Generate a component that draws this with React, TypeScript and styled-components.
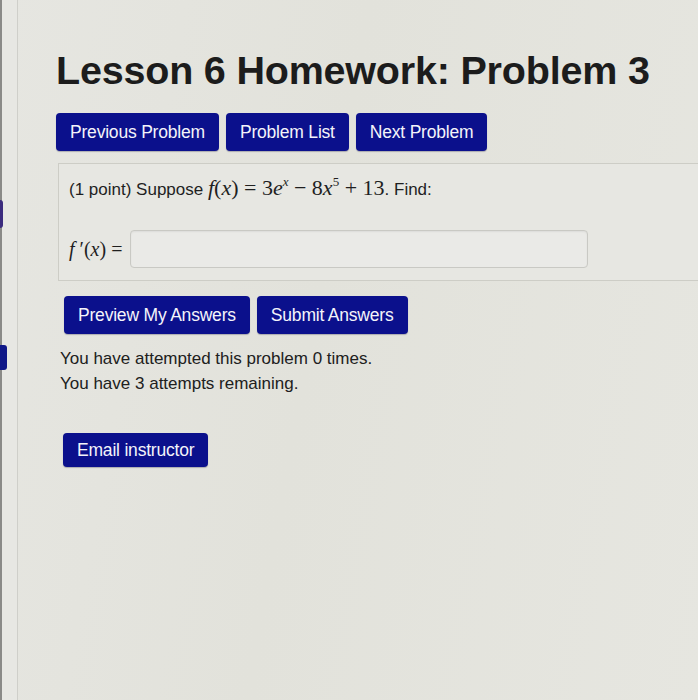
import React from 'react'
import styled, { createGlobalStyle } from 'styled-components'

const GlobalStyle = createGlobalStyle`
  html, body {
    margin: 0;
    padding: 0;
    overflow: hidden;
    background: #e3e3dd;
  }
  body {
    font-family: "Liberation Sans", Arial, Helvetica, sans-serif;
    color: #1f1f1f;
  }
`

const Page = styled.div`
  display: flex;
  width: 698px;
  height: 700px;
  overflow: hidden;
  background: linear-gradient(100deg, #e6e6e1 0%, #e2e2db 45%, #e6e6e0 100%);
`

const Sidebar = styled.div`
  width: 15px;
  flex: none;
  display: flex;
  flex-direction: column;
  border-left: 2px solid #8a8a88;
  border-right: 1px solid #cfcfca;
  background: #e7e7e3;
  padding-top: 200px;
`

const SideTab = styled.div<{ $w: number; $h: number; $gap: number; $color: string }>`
  width: ${p => p.$w}px;
  height: ${p => p.$h}px;
  margin-top: ${p => p.$gap}px;
  margin-left: -2px;
  background: ${p => p.$color};
  border-radius: 0 3px 3px 0;
`

const Main = styled.main`
  flex: 1;
  min-width: 0;
  padding: 45px 0 0 38px;
`

const Title = styled.h1`
  margin: 0 0 18px;
  font-size: 39.5px;
  line-height: 50px;
  font-weight: 700;
  color: #1c1c1c;
  letter-spacing: -0.2px;
`

const ButtonRow = styled.div<{ $indent?: number; $top?: number }>`
  display: flex;
  gap: 7px;
  margin-left: ${p => p.$indent ?? 0}px;
  margin-top: ${p => p.$top ?? 0}px;
`

const NavButton = styled.button<{ $height?: number }>`
  height: ${p => p.$height ?? 38}px;
  padding: 0 14px;
  border: none;
  border-radius: 4px;
  background: #0b108c;
  color: #f4f4fa;
  font-family: "Liberation Sans", Arial, sans-serif;
  font-size: 17.5px;
  letter-spacing: -0.2px;
  box-shadow: 0 1px 1px rgba(0, 0, 40, 0.25);
`

const ProblemPanel = styled.section`
  margin: 12px -30px 0 2px;
  padding: 14px 10px 12px 10px;
  background: #e7e7e2;
  border: 1px solid #cdcdc6;
  border-right: none;
`

const ProblemText = styled.p`
  margin: 0 0 28px;
  font-size: 17px;
  line-height: 24px;
`

const Math = styled.span<{ $size?: number }>`
  font-family: "Liberation Serif", "Times New Roman", serif;
  font-size: ${p => p.$size ?? 22}px;
  line-height: 0;

  i {
    font-style: italic;
  }

  sup {
    font-size: 13px;
    line-height: 0;
    vertical-align: 9px;
  }
`

const AnswerRow = styled.div`
  display: flex;
  align-items: center;
  gap: 8px;
`

const AnswerInput = styled.input`
  width: 458px;
  height: 38px;
  box-sizing: border-box;
  border: 1px solid #c9c9c4;
  border-radius: 4px;
  background: #eaeae7;
  box-shadow: inset 0 1px 2px rgba(0, 0, 0, 0.06);
`

const Attempts = styled.div`
  margin: 12px 0 0 4px;
  font-size: 17px;
  line-height: 25px;
  color: #202020;
`

const EmailRow = styled.div`
  margin: 37px 0 0 7px;
`

export default function App() {
  return (
    <>
      <GlobalStyle />
      <Page>
        <Sidebar>
          <SideTab $w={3} $h={28} $gap={0} $color="#3b2b7e" />
          <SideTab $w={7} $h={25} $gap={117} $color="#0f1788" />
        </Sidebar>
        <Main>
          <Title>Lesson 6 Homework: Problem 3</Title>
          <ButtonRow>
            <NavButton>Previous Problem</NavButton>
            <NavButton>Problem List</NavButton>
            <NavButton>Next Problem</NavButton>
          </ButtonRow>
          <ProblemPanel>
            <ProblemText>
              (1 point) Suppose{' '}
              <Math>
                <i>f</i>(<i>x</i>) = 3<i>e</i><sup><i>x</i></sup> − 8<i>x</i><sup>5</sup> + 13
              </Math>
              . Find:
            </ProblemText>
            <AnswerRow>
              <Math $size={20}>
                <i>f</i> ′(<i>x</i>) =
              </Math>
              <AnswerInput aria-label="answer" />
            </AnswerRow>
          </ProblemPanel>
          <ButtonRow $indent={8} $top={15}>
            <NavButton>Preview My Answers</NavButton>
            <NavButton>Submit Answers</NavButton>
          </ButtonRow>
          <Attempts>
            You have attempted this problem 0 times.
            <br />
            You have 3 attempts remaining.
          </Attempts>
          <EmailRow>
            <NavButton $height={34}>Email instructor</NavButton>
          </EmailRow>
        </Main>
      </Page>
    </>
  )
}
